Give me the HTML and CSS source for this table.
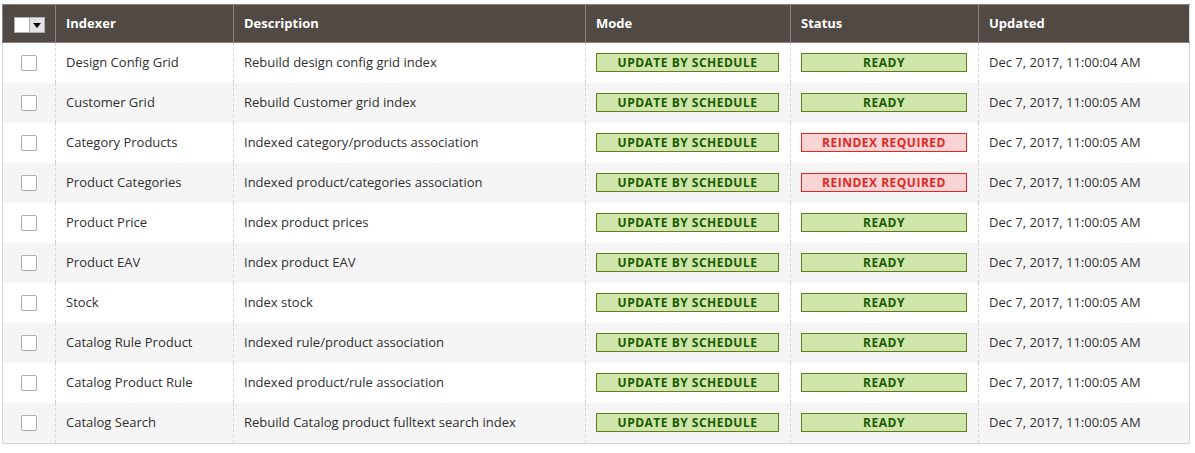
FILE: index.html
```html
<!DOCTYPE html>
<html>
<head>
<meta charset="utf-8">
<link rel="stylesheet" href="styles.css">
</head>
<body>
<table class="grid">
  <colgroup>
    <col class="c-check"><col class="c-indexer"><col class="c-desc"><col class="c-mode"><col class="c-status"><col class="c-updated">
  </colgroup>
  <thead>
    <tr>
      <th class="th-check"><span class="mass"><span class="mass-box"></span><span class="mass-arrow"></span></span></th>
      <th>Indexer</th>
      <th>Description</th>
      <th>Mode</th>
      <th>Status</th>
      <th>Updated</th>
    </tr>
  </thead>
  <tbody>
    <tr><td class="td-check"><span class="cb"></span></td><td>Design Config Grid</td><td>Rebuild design config grid index</td><td><span class="badge mode">UPDATE BY SCHEDULE</span></td><td><span class="badge ok">READY</span></td><td>Dec 7, 2017, 11:00:04 AM</td></tr>
    <tr><td class="td-check"><span class="cb"></span></td><td>Customer Grid</td><td>Rebuild Customer grid index</td><td><span class="badge mode">UPDATE BY SCHEDULE</span></td><td><span class="badge ok">READY</span></td><td>Dec 7, 2017, 11:00:05 AM</td></tr>
    <tr><td class="td-check"><span class="cb"></span></td><td>Category Products</td><td>Indexed category/products association</td><td><span class="badge mode">UPDATE BY SCHEDULE</span></td><td><span class="badge err">REINDEX REQUIRED</span></td><td>Dec 7, 2017, 11:00:05 AM</td></tr>
    <tr><td class="td-check"><span class="cb"></span></td><td>Product Categories</td><td>Indexed product/categories association</td><td><span class="badge mode">UPDATE BY SCHEDULE</span></td><td><span class="badge err">REINDEX REQUIRED</span></td><td>Dec 7, 2017, 11:00:05 AM</td></tr>
    <tr><td class="td-check"><span class="cb"></span></td><td>Product Price</td><td>Index product prices</td><td><span class="badge mode">UPDATE BY SCHEDULE</span></td><td><span class="badge ok">READY</span></td><td>Dec 7, 2017, 11:00:05 AM</td></tr>
    <tr><td class="td-check"><span class="cb"></span></td><td>Product EAV</td><td>Index product EAV</td><td><span class="badge mode">UPDATE BY SCHEDULE</span></td><td><span class="badge ok">READY</span></td><td>Dec 7, 2017, 11:00:05 AM</td></tr>
    <tr><td class="td-check"><span class="cb"></span></td><td>Stock</td><td>Index stock</td><td><span class="badge mode">UPDATE BY SCHEDULE</span></td><td><span class="badge ok">READY</span></td><td>Dec 7, 2017, 11:00:05 AM</td></tr>
    <tr><td class="td-check"><span class="cb"></span></td><td>Catalog Rule Product</td><td>Indexed rule/product association</td><td><span class="badge mode">UPDATE BY SCHEDULE</span></td><td><span class="badge ok">READY</span></td><td>Dec 7, 2017, 11:00:05 AM</td></tr>
    <tr><td class="td-check"><span class="cb"></span></td><td>Catalog Product Rule</td><td>Indexed product/rule association</td><td><span class="badge mode">UPDATE BY SCHEDULE</span></td><td><span class="badge ok">READY</span></td><td>Dec 7, 2017, 11:00:05 AM</td></tr>
    <tr><td class="td-check"><span class="cb"></span></td><td>Catalog Search</td><td>Rebuild Catalog product fulltext search index</td><td><span class="badge mode">UPDATE BY SCHEDULE</span></td><td><span class="badge ok">READY</span></td><td>Dec 7, 2017, 11:00:05 AM</td></tr>
  </tbody>
</table>
</body>
</html>
```
FILE: styles.css
```css
html, body { margin: 0; padding: 0; background: #fff; }
body { padding: 4px 0 0 2px; font-family: "Open Sans", "Liberation Sans", sans-serif; font-size: 13px; color: #303030; }

.grid { border-collapse: collapse; table-layout: fixed; width: 1187px; border: 1px solid #d6d6d6; }
.c-check { width: 53px; }
.c-indexer { width: 178px; }
.c-desc { width: 352px; }
.c-mode { width: 205px; }
.c-status { width: 188px; }
.c-updated { width: 211px; }

.grid thead th {
  background: #514943; color: #fff; font-weight: 700; text-align: left;
  height: 36px; padding: 0 10px 1px; border-left: 1px solid #8a837f;
  border-bottom: 1px solid #8a837f; border-top: 1px solid #8a837f; vertical-align: middle;
  line-height: 18px;
}
.grid thead th.th-check { text-align: center; padding: 0; }
.grid tbody td {
  height: 37px; padding: 0 10px 3px; vertical-align: middle;
  border-left: 1px dashed #d6d6d6; line-height: 18px; white-space: nowrap;
}
.grid tbody td:first-child { border-left: 1px solid #d6d6d6; }
.grid tbody tr:nth-child(even) td { background: #f5f5f5; }
.grid tbody td.td-check { text-align: center; padding: 0 0 3px; }

.mass { display: inline-flex; vertical-align: middle; border: 1px solid #adadad; }
.mass-box { width: 14px; height: 14px; background: #fff; }
.mass-arrow { width: 14px; height: 14px; background: #e3e3e3; border-left: 1px solid #adadad; position: relative; }
.mass-arrow::after { content: ""; position: absolute; left: 3px; top: 5px; border-left: 4px solid transparent; border-right: 4px solid transparent; border-top: 5px solid #000; }

.cb { display: inline-block; width: 14px; height: 14px; border: 1px solid #adadad; border-radius: 2px; background: #fff; vertical-align: middle; }

.badge { display: block; height: 17px; line-height: 17px; text-align: center; font-weight: 700; font-size: 12px; letter-spacing: 0.5px; margin-top: 2px; }
.badge.mode { width: 181px; background: #d0e5a9; border: 1px solid #5b8116; color: #185b00; }
.badge.ok { width: 164px; background: #d0e5a9; border: 1px solid #5b8116; color: #185b00; }
.badge.err { width: 164px; background: #f9d4d4; border: 1px solid #e22626; color: #e22626; }
```
